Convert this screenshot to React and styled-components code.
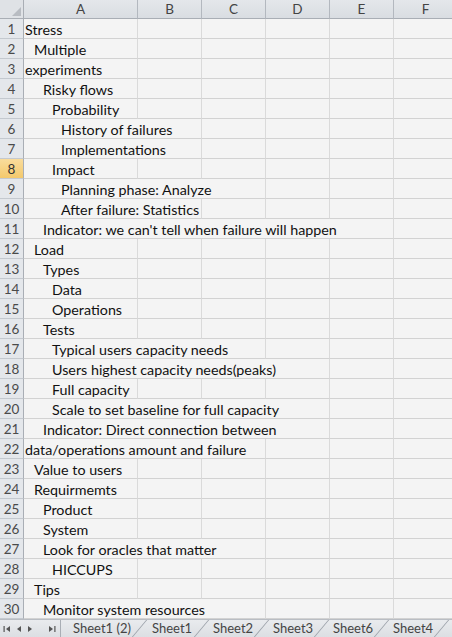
import React from 'react';
import styled, { createGlobalStyle } from 'styled-components';

const Global = createGlobalStyle`
  html, body { margin: 0; padding: 0; background: #f4f4f4; overflow: hidden; }
  body { font-family: Lato, "Noto Sans", sans-serif; }
`;

const Sheet = styled.div`
  width: 452px;
  height: 637px;
  display: flex;
  flex-direction: column;
  overflow: hidden;
  background: #f4f4f4;
`;

const Grid = styled.div`
  display: grid;
  grid-template-columns: 24px 114px 64px 64px 64px 64px 64px;
  grid-template-rows: 19px repeat(30, 20px);
  width: 452px;
  overflow: hidden;
  flex: none;
`;

const Corner = styled.div`
  box-sizing: border-box;
  background: #dfe2e6;
  border-right: 1px solid #a9aeb5;
  border-bottom: 1px solid #a9aeb5;
  display: flex;
  align-items: flex-end;
  justify-content: flex-end;
  padding: 0 2px 2px 0;
`;

const ColHead = styled.div`
  box-sizing: border-box;
  background: linear-gradient(#e4e7eb, #d9dde2);
  border-right: 1px solid #b3b8bf;
  border-bottom: 1px solid #a9aeb5;
  color: #444;
  font-size: 13.5px;
  line-height: 19px;
  text-align: center;
`;

const RowHead = styled.div`
  box-sizing: border-box;
  background: ${p => (p.$active ? 'linear-gradient(#f9dc9c, #f4c96c)' : '#e4e7eb')};
  border-right: 1px solid #a9aeb5;
  border-bottom: 1px solid #c4c9cf;
  color: ${p => (p.$active ? '#333' : '#4a4a4a')};
  font-size: 13.5px;
  line-height: 20px;
  text-align: center;
`;

const Cell = styled.div`
  box-sizing: border-box;
  background: #f4f4f4;
  border-right: 1px solid #dadada;
  border-bottom: 1px solid #d2d2d2;
`;

const TextCell = styled(Cell)`
  grid-column: span ${p => p.$span};
  padding-left: ${p => 1 + p.$level * 9}px;
  font-size: 14.3px;
  line-height: 21px;
  color: #111;
  white-space: nowrap;
  overflow: hidden;
`;

const TabBar = styled.div`
  flex: 1;
  display: flex;
  align-items: stretch;
  background: linear-gradient(#e9ebee, #dcdfe3);
  border-top: 1px solid #b9bdc3;
  box-sizing: border-box;
`;

const Nav = styled.div`
  width: 61px;
  display: flex;
  align-items: center;
  border-right: 1px solid #a9aeb5;
  box-sizing: border-box;
`;

const NavBtn = styled.div`
  width: 11px;
  margin-left: ${p => p.$ml}px;
  display: flex;
  justify-content: center;
`;

const Tabs = styled.div`
  display: flex;
  align-items: stretch;
  padding-left: 3px;
`;

const Tab = styled.div`
  position: relative;
  width: ${p => p.$w}px;
  box-sizing: border-box;
  padding-left: ${p => p.$pl}px;
  font-size: 13px;
  line-height: 17px;
  color: #444;
  white-space: nowrap;
  &::after {
    content: '';
    position: absolute;
    right: 4px;
    top: 0;
    bottom: 0;
    width: 1px;
    background: #9aa0a8;
    transform: skewX(-40deg);
  }
`;

const rows = [
  ['Stress', 0, 1],
  ['Multiple', 1, 1],
  ['experiments', 0, 1],
  ['Risky flows', 2, 1],
  ['Probability', 3, 1],
  ['History of failures', 4, 2],
  ['Implementations', 4, 2],
  ['Impact', 3, 1],
  ['Planning phase: Analyze', 4, 3],
  ['After failure: Statistics', 4, 2],
  ["Indicator: we can't tell when failure will happen", 2, 5],
  ['Load', 1, 1],
  ['Types', 2, 1],
  ['Data', 3, 1],
  ['Operations', 3, 1],
  ['Tests', 2, 1],
  ['Typical users capacity needs', 3, 3],
  ['Users highest capacity needs(peaks)', 3, 4],
  ['Full capacity', 3, 1],
  ['Scale to set baseline for full capacity', 3, 4],
  ['Indicator: Direct connection between', 2, 4],
  ['data/operations amount and failure', 0, 3],
  ['Value to users', 1, 1],
  ['Requirmemts', 1, 1],
  ['Product', 2, 1],
  ['System', 2, 1],
  ['Look for oracles that matter', 2, 3],
  ['HICCUPS', 3, 1],
  ['Tips', 1, 1],
  ['Monitor system resources', 2, 3],
];

const cols = ['A', 'B', 'C', 'D', 'E', 'F'];

const tabs = [
  ['Sheet1 (2)', 80, 9],
  ['Sheet1', 62, 8],
  ['Sheet2', 60, 7],
  ['Sheet3', 60, 7],
  ['Sheet6', 60, 7],
  ['Sheet4', 60, 7],
];

const Tri = ({ dir, bar }) => (
  <svg width="8" height="8" viewBox="0 0 8 8">
    {dir === 'l' ? (
      <>
        {bar && <rect x="0.5" y="1" width="1.2" height="6" fill="#555" />}
        <polygon points={bar ? '7,1 3,4 7,7' : '6,1 2,4 6,7'} fill="#555" />
      </>
    ) : (
      <>
        <polygon points={bar ? '1,1 5,4 1,7' : '2,1 6,4 2,7'} fill="#555" />
        {bar && <rect x="6.3" y="1" width="1.2" height="6" fill="#555" />}
      </>
    )}
  </svg>
);

export default function App() {
  return (
    <Sheet>
      <Global />
      <Grid>
        <Corner>
          <svg width="9" height="9" viewBox="0 0 9 9">
            <polygon points="9,0 9,9 0,9" fill="#b8bcc2" />
          </svg>
        </Corner>
        {cols.map(c => (
          <ColHead key={c}>{c}</ColHead>
        ))}
        {rows.map(([text, level, span], i) => (
          <React.Fragment key={i}>
            <RowHead $active={i === 7}>{i + 1}</RowHead>
            <TextCell $level={level} $span={span}>{text}</TextCell>
            {Array.from({ length: 6 - span }).map((_, j) => (
              <Cell key={j} />
            ))}
          </React.Fragment>
        ))}
      </Grid>
      <TabBar>
        <Nav>
          <NavBtn $ml={1}><Tri dir="l" bar /></NavBtn>
          <NavBtn $ml={1}><Tri dir="l" /></NavBtn>
          <NavBtn $ml={0}><Tri dir="r" /></NavBtn>
          <NavBtn $ml={11}><Tri dir="r" bar /></NavBtn>
        </Nav>
        <Tabs>
          {tabs.map(([t, w, pl]) => (
            <Tab key={t} $w={w} $pl={pl}>{t}</Tab>
          ))}
        </Tabs>
      </TabBar>
    </Sheet>
  );
}
